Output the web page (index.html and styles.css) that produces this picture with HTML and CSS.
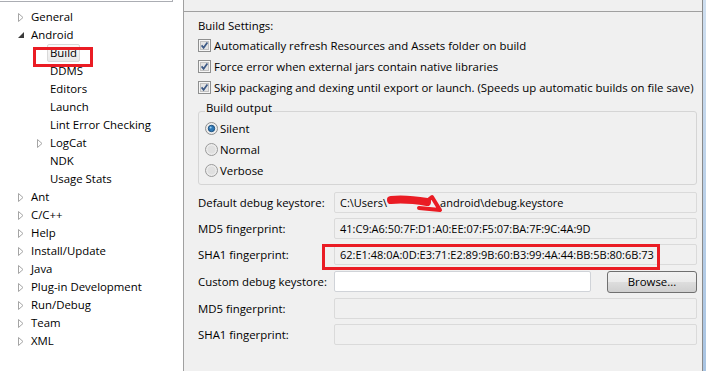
FILE: index.html
```html
<!DOCTYPE html>
<html>
<head>
    <title>Preferences - Android Build</title>
    <link rel="stylesheet" href="styles.css">
</head>
<body>
<div class="window">
    <aside class="tree">
        <div class="filter"></div>
        <ul class="tree-list">
            <li class="tree-item"><span class="twisty"><svg width="6" height="9"><path d="M0.5 0.5 L5 4.5 L0.5 8.5 Z" fill="none" stroke="#a5a5a5"/></svg></span><span class="tree-label">General</span></li>
            <li class="tree-item"><span class="twisty"><svg width="6" height="6"><path d="M6 0 L6 6 L0 6 Z" fill="#3a3a3a"/></svg></span><span class="tree-label">Android</span></li>
            <li class="tree-item child selected"><span class="twisty"></span><span class="tree-label">Build</span><span class="mark mark-build"></span></li>
            <li class="tree-item child"><span class="twisty"></span><span class="tree-label">DDMS</span></li>
            <li class="tree-item child"><span class="twisty"></span><span class="tree-label">Editors</span></li>
            <li class="tree-item child"><span class="twisty"></span><span class="tree-label">Launch</span></li>
            <li class="tree-item child"><span class="twisty"></span><span class="tree-label">Lint Error Checking</span></li>
            <li class="tree-item sub"><span class="twisty"><svg width="6" height="9"><path d="M0.5 0.5 L5 4.5 L0.5 8.5 Z" fill="none" stroke="#a5a5a5"/></svg></span><span class="tree-label">LogCat</span></li>
            <li class="tree-item child"><span class="twisty"></span><span class="tree-label">NDK</span></li>
            <li class="tree-item child"><span class="twisty"></span><span class="tree-label">Usage Stats</span></li>
            <li class="tree-item"><span class="twisty"><svg width="6" height="9"><path d="M0.5 0.5 L5 4.5 L0.5 8.5 Z" fill="none" stroke="#a5a5a5"/></svg></span><span class="tree-label">Ant</span></li>
            <li class="tree-item"><span class="twisty"><svg width="6" height="9"><path d="M0.5 0.5 L5 4.5 L0.5 8.5 Z" fill="none" stroke="#a5a5a5"/></svg></span><span class="tree-label">C/C++</span></li>
            <li class="tree-item"><span class="twisty"><svg width="6" height="9"><path d="M0.5 0.5 L5 4.5 L0.5 8.5 Z" fill="none" stroke="#a5a5a5"/></svg></span><span class="tree-label">Help</span></li>
            <li class="tree-item"><span class="twisty"><svg width="6" height="9"><path d="M0.5 0.5 L5 4.5 L0.5 8.5 Z" fill="none" stroke="#a5a5a5"/></svg></span><span class="tree-label">Install/Update</span></li>
            <li class="tree-item"><span class="twisty"><svg width="6" height="9"><path d="M0.5 0.5 L5 4.5 L0.5 8.5 Z" fill="none" stroke="#a5a5a5"/></svg></span><span class="tree-label">Java</span></li>
            <li class="tree-item"><span class="twisty"><svg width="6" height="9"><path d="M0.5 0.5 L5 4.5 L0.5 8.5 Z" fill="none" stroke="#a5a5a5"/></svg></span><span class="tree-label">Plug-in Development</span></li>
            <li class="tree-item"><span class="twisty"><svg width="6" height="9"><path d="M0.5 0.5 L5 4.5 L0.5 8.5 Z" fill="none" stroke="#a5a5a5"/></svg></span><span class="tree-label">Run/Debug</span></li>
            <li class="tree-item"><span class="twisty"><svg width="6" height="9"><path d="M0.5 0.5 L5 4.5 L0.5 8.5 Z" fill="none" stroke="#a5a5a5"/></svg></span><span class="tree-label">Team</span></li>
            <li class="tree-item"><span class="twisty"><svg width="6" height="9"><path d="M0.5 0.5 L5 4.5 L0.5 8.5 Z" fill="none" stroke="#a5a5a5"/></svg></span><span class="tree-label">XML</span></li>
        </ul>
    </aside>

    <main class="page">
        <div class="page-head"></div>
        <div class="page-body">
            <div class="section-title">Build Settings:</div>
            <div class="check">
                <svg class="box" width="13" height="13"><rect x="0.5" y="0.5" width="12" height="12" fill="#f6f6f6" stroke="#8e8f8f"/><rect x="2.5" y="2.5" width="8" height="8" fill="#e4e4e4" stroke="#c2c2c2"/><path d="M3.6 6.4 L5.6 8.8 L9.4 3.6" fill="none" stroke="#3d5a86" stroke-width="1.7"/></svg>
                <span>Automatically refresh Resources and Assets folder on build</span>
            </div>
            <div class="check">
                <svg class="box" width="13" height="13"><rect x="0.5" y="0.5" width="12" height="12" fill="#f6f6f6" stroke="#8e8f8f"/><rect x="2.5" y="2.5" width="8" height="8" fill="#e4e4e4" stroke="#c2c2c2"/><path d="M3.6 6.4 L5.6 8.8 L9.4 3.6" fill="none" stroke="#3d5a86" stroke-width="1.7"/></svg>
                <span>Force error when external jars contain native libraries</span>
            </div>
            <div class="check">
                <svg class="box" width="13" height="13"><rect x="0.5" y="0.5" width="12" height="12" fill="#f6f6f6" stroke="#8e8f8f"/><rect x="2.5" y="2.5" width="8" height="8" fill="#e4e4e4" stroke="#c2c2c2"/><path d="M3.6 6.4 L5.6 8.8 L9.4 3.6" fill="none" stroke="#3d5a86" stroke-width="1.7"/></svg>
                <span>Skip packaging and dexing until export or launch. (Speeds up automatic builds on file save)</span>
            </div>

            <fieldset class="group">
                <legend>Build output</legend>
                <div class="radio">
                    <svg width="13" height="13"><circle cx="6.5" cy="6.5" r="6" fill="#ececec" stroke="#8e8f8f"/><circle cx="6.5" cy="6.5" r="3.2" fill="#2f78b5" stroke="#1b4f7e"/><circle cx="5.6" cy="5.6" r="1" fill="#9fd0f2"/></svg>
                    <span>Silent</span>
                </div>
                <div class="radio">
                    <svg width="13" height="13"><circle cx="6.5" cy="6.5" r="6" fill="#ececec" stroke="#9a9a9a"/><circle cx="6.5" cy="6.5" r="4" fill="#e0e0e0"/></svg>
                    <span>Normal</span>
                </div>
                <div class="radio">
                    <svg width="13" height="13"><circle cx="6.5" cy="6.5" r="6" fill="#ececec" stroke="#9a9a9a"/><circle cx="6.5" cy="6.5" r="4" fill="#e0e0e0"/></svg>
                    <span>Verbose</span>
                </div>
            </fieldset>

            <div class="keys">
                <div class="key-row">
                    <span class="key-label">Default debug keystore:</span>
                    <div class="field">C:\Users\<span class="redacted"></span>android\debug.keystore
                        <svg class="scribble" width="120" height="21"><path d="M56 7 C66 6, 80 7, 92 9" fill="none" stroke="#ea1c24" stroke-width="8" stroke-linecap="round"/><path d="M92 8 L97 4 L105 17 L84 15" fill="none" stroke="#ea1c24" stroke-width="4" stroke-linejoin="round" stroke-linecap="round"/></svg>
                    </div>
                </div>
                <div class="key-row">
                    <span class="key-label">MD5 fingerprint:</span>
                    <div class="field">41:C9:A6:50:7F:D1:A0:EE:07:F5:07:BA:7F:9C:4A:9D</div>
                </div>
                <div class="key-row">
                    <span class="key-label">SHA1 fingerprint:</span>
                    <div class="field">62:E1:48:0A:0D:E3:71:E2:89:9B:60:B3:99:4A:44:BB:5B:80:6B:73<span class="mark mark-sha1"></span></div>
                </div>
                <div class="key-row custom">
                    <span class="key-label">Custom debug keystore:</span>
                    <div class="field-line">
                        <div class="field input"></div>
                        <button class="button">Browse...</button>
                    </div>
                </div>
                <div class="key-row">
                    <span class="key-label">MD5 fingerprint:</span>
                    <div class="field"></div>
                </div>
                <div class="key-row">
                    <span class="key-label">SHA1 fingerprint:</span>
                    <div class="field"></div>
                </div>
            </div>
        </div>
    </main>
    <div class="desktop-edge"></div>
</div>
</body>
</html>
```
FILE: styles.css
```css
body {
    margin: 0;
    width: 706px;
    height: 371px;
    overflow: hidden;
    background: #f0f0f0;
    font-family: "Open Sans", "Noto Sans", sans-serif;
    font-size: 11.4px;
    color: #000;
}
.window {
    display: flex;
    height: 371px;
}

/* left tree */
.tree {
    flex: none;
    width: 183px;
    background: #fff;
    border-right: 1px solid #a0a0a0;
}
.filter {
    width: 172px;
    height: 1px;
    border-bottom: 1px solid #abadb3;
    border-right: 1px solid #abadb3;
}
.tree-list {
    list-style: none;
    margin: 6px 0 0;
    padding: 0;
}
.tree-item {
    position: relative;
    display: flex;
    align-items: center;
    height: 18px;
    padding-left: 18px;
}
.tree-item.child {
    padding-left: 37px;
}
.tree-item.sub {
    padding-left: 37px;
}
.twisty {
    flex: none;
    width: 13px;
    display: flex;
    align-items: center;
}
.tree-label {
    margin-left: -3px;
    padding: 0 2px;
    line-height: 16px;
    border: 1px solid transparent;
    white-space: nowrap;
}
.tree-item.selected .tree-label {
    background: linear-gradient(#fbfbfb, #e9e9e9);
    border-color: #d9d9d9;
    border-radius: 2px;
}
.mark {
    position: absolute;
    box-sizing: border-box;
    border: 3px solid #ea1c24;
    pointer-events: none;
}
.mark-build {
    left: 33px;
    top: 3px;
    width: 60px;
    height: 20px;
}

/* right page */
.page {
    flex: 1;
    display: flex;
    flex-direction: column;
    border-right: 1px solid #8a8a8a;
}
.page-head {
    height: 11px;
    border-bottom: 1px solid #a0a0a0;
}
.page-body {
    padding: 5px 5px 0 14px;
}
.section-title {
    line-height: 18px;
}
.check {
    display: flex;
    align-items: center;
    gap: 3px;
    height: 21px;
    white-space: nowrap;
}
.box {
    flex: none;
}
.group {
    margin: 6px 0 0;
    padding: 0 6px 3px;
    border: 1px solid #d5d5d5;
    border-radius: 3px;
    min-width: 0;
}
.group legend {
    position: relative;
    top: -3px;
    padding: 0 1px;
    line-height: 14px;
}
.radio {
    display: flex;
    align-items: center;
    gap: 2px;
    height: 21px;
}
.radio svg {
    flex: none;
}

/* keystore rows */
.keys {
    margin-top: 7px;
}
.key-row {
    display: flex;
    align-items: center;
    height: 21px;
    margin-bottom: 5px;
}
.key-row.custom {
    height: 23px;
    margin-top: 2px;
}
.key-label {
    flex: none;
    width: 136px;
    white-space: nowrap;
}
.field {
    position: relative;
    flex: 1;
    box-sizing: border-box;
    height: 21px;
    padding: 0 5px;
    font-size: 11px;
    line-height: 19px;
    background: #f0f0f0;
    border: 1px solid #dadada;
    border-radius: 2px;
    white-space: nowrap;
}
.field.input {
    background: #fff;
    border-color: #d0d3d8;
}
.field-line {
    flex: 1;
    display: flex;
    align-items: center;
    gap: 16px;
}
.button {
    flex: none;
    width: 90px;
    height: 22px;
    padding: 0;
    font: inherit;
    color: #000;
    border: 1px solid #707070;
    border-radius: 3px;
    background: linear-gradient(#f2f2f2 0%, #ebebeb 48%, #dddddd 52%, #cfcfcf 100%);
}
.redacted {
    display: inline-block;
    width: 53px;
}
.scribble {
    position: absolute;
    left: 0;
    top: 0;
}
.mark-sha1 {
    left: -13px;
    top: -1px;
    width: 338px;
    height: 26px;
}

.desktop-edge {
    flex: none;
    width: 3px;
    background: linear-gradient(#cfdff0, #a9c4e2);
}
```
